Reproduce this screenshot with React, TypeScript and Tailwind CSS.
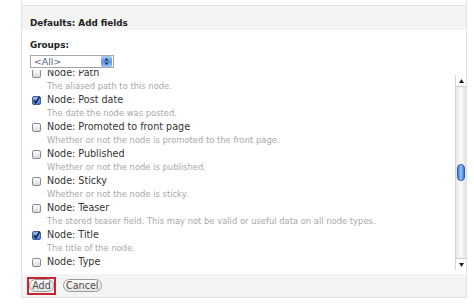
import React from "react";

type Field = { label: string; desc?: string; checked?: boolean };

const FIELDS: Field[] = [
  { label: "Node: Path", desc: "The aliased path to this node." },
  { label: "Node: Post date", desc: "The date the node was posted.", checked: true },
  { label: "Node: Promoted to front page", desc: "Whether or not the node is promoted to the front page." },
  { label: "Node: Published", desc: "Whether or not the node is published." },
  { label: "Node: Sticky", desc: "Whether or not the node is sticky." },
  {
    label: "Node: Teaser",
    desc: "The stored teaser field. This may not be valid or useful data on all node types.",
  },
  { label: "Node: Title", desc: "The title of the node.", checked: true },
  { label: "Node: Type" },
];

function Checkbox({ checked }: { checked?: boolean }) {
  if (checked) {
    return (
      <svg width="9" height="9" viewBox="0 0 9 9" className="shrink-0">
        <defs>
          <linearGradient id="cbOn" x1="0" y1="0" x2="0" y2="1">
            <stop offset="0" stopColor="#9cc2f2" />
            <stop offset="1" stopColor="#3b78d6" />
          </linearGradient>
        </defs>
        <rect x="0.5" y="0.5" width="8" height="8" rx="1.5" fill="url(#cbOn)" stroke="#3f5f8f" />
        <path d="M2 4.3 L3.8 6.6 L7.6 0.8" fill="none" stroke="#1a1a2a" strokeWidth="1.5" />
      </svg>
    );
  }
  return (
    <svg width="9" height="9" viewBox="0 0 9 9" className="shrink-0">
      <defs>
        <linearGradient id="cbOff" x1="0" y1="0" x2="0" y2="1">
          <stop offset="0" stopColor="#ffffff" />
          <stop offset="1" stopColor="#d8d8d8" />
        </linearGradient>
      </defs>
      <rect x="0.5" y="0.5" width="8" height="8" rx="1.5" fill="url(#cbOff)" stroke="#8a8a8a" />
    </svg>
  );
}

function Arrow({ up }: { up?: boolean }) {
  return (
    <svg width="5" height="4" viewBox="0 0 5 4">
      <path d={up ? "M0 4 L2.5 0 L5 4 Z" : "M0 0 L2.5 4 L5 0 Z"} fill="#222" />
    </svg>
  );
}

function PillButton({ children }: { children: React.ReactNode }) {
  return (
    <span className="flex h-[13px] items-center rounded-full border border-[#9a9a9a] bg-gradient-to-b from-white to-[#e4e4e4] px-[2px] text-[9.6px] leading-none text-[#4a4a4a]">
      {children}
    </span>
  );
}

export default function App() {
  return (
    <div className="h-[307px] w-[474px] overflow-hidden bg-white font-['DejaVu_Sans',sans-serif]">
      <div className="ml-[21px] w-[446px] border-x border-b border-[#e2e2e2]">
        <div className="h-[5px]" />
        <div className="h-[25px] border-t border-[#e2e2e2] bg-[#f4f4f4] pl-[8px] pt-[11px] text-[8.8px] font-bold leading-[12px] text-[#222]">
          Defaults: Add fields
        </div>

        <div className="pl-[8px] pt-[9px] text-[8.8px] font-bold leading-[12px] text-[#222]">Groups:</div>
        <div className="ml-[8px] mt-[4px] flex h-[13px] w-[84px] items-center border border-[#a6a6a6] bg-white">
          <span className="flex-1 pl-[3px] text-[9.4px] leading-none text-[#50607a]">&lt;All&gt;</span>
          <svg width="11" height="11" viewBox="0 0 11 11" className="mr-[1px]">
            <defs>
              <linearGradient id="selBtn" x1="0" y1="0" x2="0" y2="1">
                <stop offset="0" stopColor="#a9cbf5" />
                <stop offset="0.5" stopColor="#5b95e2" />
                <stop offset="1" stopColor="#9cc4f3" />
              </linearGradient>
            </defs>
            <rect x="0" y="0" width="11" height="11" rx="1.5" fill="url(#selBtn)" />
            <path d="M3.5 4.6 L5.5 2 L7.5 4.6 Z" fill="#1c2a44" />
            <path d="M3.5 6.4 L5.5 9 L7.5 6.4 Z" fill="#1c2a44" />
          </svg>
        </div>

        <div className="mt-[2px] flex h-[200px]">
          <div className="flex-1 overflow-hidden">
            <div className="-mt-[4px] pl-[10px]">
              {FIELDS.map((f) => (
                <div key={f.label}>
                  <div className="flex h-[14px] items-center gap-[6px]">
                    <Checkbox checked={f.checked} />
                    <span className="whitespace-nowrap text-[9.6px] leading-none text-[#333]">{f.label}</span>
                  </div>
                  {f.desc ? (
                    <div className="h-[13px] whitespace-nowrap pl-[15px] text-[8.4px] leading-[13px] text-[#a8a8a8]">
                      {f.desc}
                    </div>
                  ) : null}
                </div>
              ))}
            </div>
          </div>

          <div className="mt-[5px] flex w-[11px] flex-col border-l border-[#d4d4d4] bg-gradient-to-r from-[#e6e6e6] via-[#fbfbfb] to-[#e2e2e2]">
            <div className="flex h-[12px] items-center justify-center border-b border-[#d0d0d0] bg-white">
              <Arrow up />
            </div>
            <div className="flex-1">
              <div className="mx-auto mt-[77px] h-[17px] w-[8px] rounded-full border border-[#2f5fa8] bg-gradient-to-r from-[#3f7bd8] via-[#9cc3f5] to-[#3b74cf]" />
            </div>
            <div className="flex h-[12px] items-center justify-center border-t border-[#d0d0d0] bg-white">
              <Arrow />
            </div>
          </div>
        </div>

        <div className="mt-[4px] flex h-[23px] items-center gap-[7px] bg-[#f4f4f4] pl-[5px]">
          <span className="flex h-[18px] w-[29px] items-center justify-center border-2 border-[#c8262e]">
            <PillButton>Add</PillButton>
          </span>
          <PillButton>Cancel</PillButton>
        </div>
      </div>
    </div>
  );
}
